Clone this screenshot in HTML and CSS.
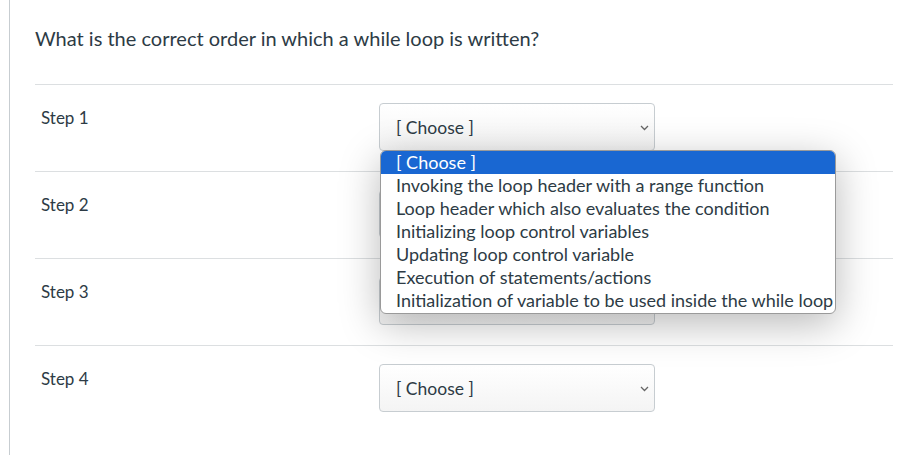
FILE: index.html
```html
<!DOCTYPE html>
<html lang="en">
  <head>
    <meta charset="UTF-8" />
    <meta name="viewport" content="width=device-width, initial-scale=1.0" />
    <title>Quiz question</title>
    <link rel="stylesheet" href="styles.css">
  </head>
  <body>
    <div class="page">
      <p class="question">What is the correct order in which a while loop is written?</p>
      <div class="answers">
        <div class="answer-row">
          <div class="step">Step 1</div>
          <div class="select-wrap">
            <div class="select">
              <span>[ Choose ]</span>
              <svg class="chevron" width="9" height="6" viewBox="0 0 9 6"><path d="M1 1l3.5 3.5L8 1" fill="none" stroke="#666" stroke-width="1.3"/></svg>
            </div>
            <ul class="dropdown">
              <li class="selected">[ Choose ]</li>
              <li>Invoking the loop header with a range function</li>
              <li>Loop header which also evaluates the condition</li>
              <li>Initializing loop control variables</li>
              <li>Updating loop control variable</li>
              <li>Execution of statements/actions</li>
              <li>Initialization of variable to be used inside the while loop</li>
            </ul>
          </div>
        </div>
        <div class="answer-row">
          <div class="step">Step 2</div>
          <div class="select-wrap">
            <div class="select">
              <span>[ Choose ]</span>
              <svg class="chevron" width="9" height="6" viewBox="0 0 9 6"><path d="M1 1l3.5 3.5L8 1" fill="none" stroke="#666" stroke-width="1.3"/></svg>
            </div>
          </div>
        </div>
        <div class="answer-row">
          <div class="step">Step 3</div>
          <div class="select-wrap">
            <div class="select">
              <span>[ Choose ]</span>
              <svg class="chevron" width="9" height="6" viewBox="0 0 9 6"><path d="M1 1l3.5 3.5L8 1" fill="none" stroke="#666" stroke-width="1.3"/></svg>
            </div>
          </div>
        </div>
        <div class="answer-row">
          <div class="step">Step 4</div>
          <div class="select-wrap">
            <div class="select">
              <span>[ Choose ]</span>
              <svg class="chevron" width="9" height="6" viewBox="0 0 9 6"><path d="M1 1l3.5 3.5L8 1" fill="none" stroke="#666" stroke-width="1.3"/></svg>
            </div>
          </div>
        </div>
      </div>
    </div>
  </body>
</html>
```

FILE: styles.css
```css
html,
body {
  margin: 0;
  height: 100%;
  background: #fff;
}
body {
  font-family: Lato, "Open Sans", sans-serif;
  color: #2d3b45;
  overflow: hidden;
}
.page {
  margin-left: 9px;
  border-left: 1px solid #c7cdd1;
  padding: 27px 25px 0 25px;
  min-height: 100%;
  box-sizing: border-box;
}
.question {
  margin: 0 0 35px 0;
  font-size: 20px;
  line-height: 22px;
}
.answer-row {
  display: grid;
  grid-template-columns: 344px 276px;
  border-top: 1px solid #dcdfe1;
  padding: 18px 0 20px 0;
}
.step {
  padding: 4px 0 0 6px;
  font-size: 17px;
  line-height: 22px;
}
.select-wrap {
  position: relative;
}
.select {
  display: flex;
  align-items: center;
  justify-content: space-between;
  box-sizing: border-box;
  height: 48px;
  padding: 0 5px 0 16px;
  border: 1px solid #c7cdd1;
  border-radius: 4px;
  background: linear-gradient(#fff, #f4f4f4);
  font-size: 17.5px;
}
.chevron {
  margin-top: 2px;
}
.dropdown {
  position: absolute;
  top: 47px;
  left: 1px;
  z-index: 2;
  width: 456px;
  box-sizing: border-box;
  margin: 0;
  padding: 0 0 1px 0;
  list-style: none;
  background: #fff;
  border: 1px solid #9a9a9a;
  border-radius: 6px;
  overflow: hidden;
  box-shadow: 0 10px 40px rgba(0, 0, 0, 0.28);
  font-size: 18px;
  color: #2d3b45;
}
.dropdown li {
  height: 23px;
  line-height: 22px;
  padding-left: 15px;
  white-space: nowrap;
}
.dropdown .selected {
  background: #1967d2;
  color: #fff;
}
```
